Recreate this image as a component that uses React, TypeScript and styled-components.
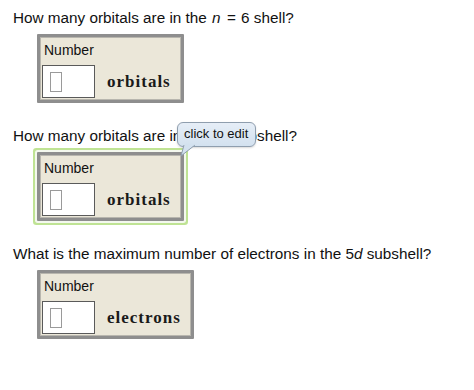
import React from "react";
import styled, { createGlobalStyle } from "styled-components";

const GlobalStyle = createGlobalStyle`
  html, body {
    margin: 0;
    padding: 0;
    background: #ffffff;
  }
  body {
    font-family: "Liberation Sans", Arial, sans-serif;
    color: #111;
  }
`;

const Page = styled.div`
  display: flex;
  flex-direction: column;
  gap: 24px;
  padding: 9px 13px;
`;

const Question = styled.div`
  position: relative;
  display: flex;
  flex-direction: column;
  align-items: flex-start;
  gap: 7px;
`;

const Prompt = styled.div`
  font-size: 15.3px;
  line-height: 18px;
  white-space: nowrap;
`;

const Var = styled.em<{ $pad?: number }>`
  font-style: italic;
  margin: 0 ${(p) => p.$pad ?? 0}px;
`;

const Op = styled.span`
  margin: 0 1px;
`;

const AnswerBox = styled.div<{ $focused?: boolean }>`
  margin-left: 24px;
  display: flex;
  flex-direction: column;
  gap: 6px;
  padding: 5px 10px 2px 2px;
  background: #ebe7d9;
  border: 3px solid #8e8e8e;
  box-shadow: ${(p) =>
    p.$focused
      ? "inset 0 0 0 1px #b8b6ae, 0 0 0 2px #f4f8ee, 0 0 0 4px #bfe394"
      : "inset 0 0 0 1px #b8b6ae"};
  border-radius: 1px;
`;

const Label = styled.div`
  font-size: 14px;
  line-height: 17px;
  padding-left: 2px;
`;

const Row = styled.div`
  display: flex;
  align-items: center;
  gap: 12px;
`;

const InputField = styled.div`
  width: 44px;
  height: 31px;
  border: 1px solid #5a5a5a;
  background: #ffffff;
  display: flex;
  align-items: center;
  padding-left: 7px;
  box-sizing: content-box;
`;

const Caret = styled.div`
  width: 10px;
  height: 18px;
  border: 1px solid #9a9a9a;
  background: #fff;
`;

const Unit = styled.span`
  font-family: "Liberation Serif", "Times New Roman", serif;
  font-weight: bold;
  font-size: 17px;
  letter-spacing: 1px;
  color: #1a1a1a;
`;

const Tooltip = styled.div`
  position: absolute;
  left: 164px;
  top: -5px;
  padding: 3px 7px 4px 6px;
  font-size: 13px;
  line-height: 16px;
  background: linear-gradient(#e6eef7, #d3e1ef);
  border: 1px solid #8f9eae;
  border-radius: 6px;
  white-space: nowrap;
  box-shadow: 0 1px 2px rgba(0, 0, 0, 0.15);
`;

const Tail = styled.svg`
  position: absolute;
  left: 3px;
  top: 22px;
  overflow: visible;
`;

type Item = {
  prompt: React.ReactNode;
  unit: string;
  focused?: boolean;
  tooltip?: string;
};

const items: Item[] = [
  {
    prompt: (
      <>
        How many orbitals are in the <Var $pad={1}>n</Var> <Op>=</Op> 6 shell?
      </>
    ),
    unit: "orbitals",
  },
  {
    prompt: (
      <>
        How many orbitals are in the 5<Var>d</Var> subshell?
      </>
    ),
    unit: "orbitals",
    focused: true,
    tooltip: "click to edit",
  },
  {
    prompt: (
      <>
        What is the maximum number of electrons in the 5<Var>d</Var> subshell?
      </>
    ),
    unit: "electrons",
  },
];

export default function App() {
  return (
    <>
      <GlobalStyle />
      <Page>
        {items.map((item, i) => (
          <Question key={i}>
            <Prompt>{item.prompt}</Prompt>
            <AnswerBox $focused={item.focused}>
              <Label>Number</Label>
              <Row>
                <InputField>
                  <Caret />
                </InputField>
                <Unit>{item.unit}</Unit>
              </Row>
            </AnswerBox>
            {item.tooltip && (
              <Tooltip>
                {item.tooltip}
                <Tail width="16" height="12" viewBox="0 0 16 12">
                  <path d="M3 0 L0 11 L14 0" fill="#d3e1ef" stroke="#8f9eae" strokeWidth="1" />
                  <path d="M3.5 -0.5 L13.5 -0.5" stroke="#d3e1ef" strokeWidth="1.5" />
                </Tail>
              </Tooltip>
            )}
          </Question>
        ))}
      </Page>
    </>
  );
}
